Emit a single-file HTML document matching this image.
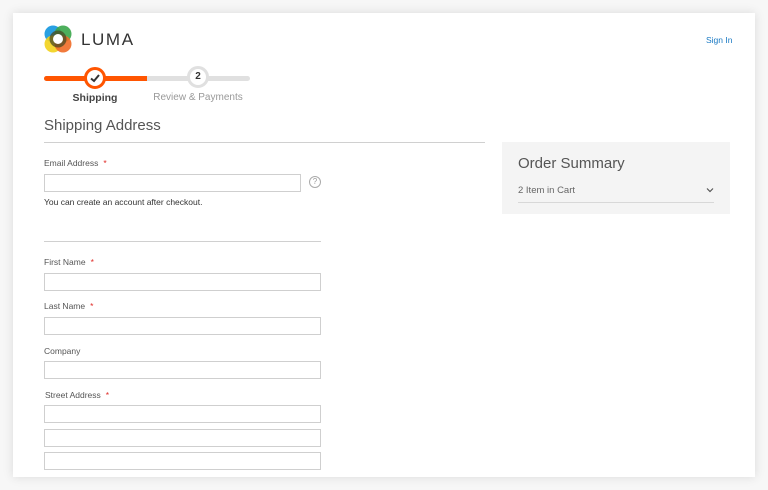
<!DOCTYPE html>
<html><head><meta charset="utf-8"><style>
*{margin:0;padding:0;box-sizing:border-box}
body{width:768px;height:490px;background:#f7f7f7;font-family:"Liberation Sans",sans-serif;position:relative;overflow:hidden}
.card{position:absolute;left:13px;top:13px;width:742px;height:464px;background:#fff;box-shadow:0 0 10px rgba(0,0,0,.12)}
.a{position:absolute}
.lbl{position:absolute;font-size:8.5px;color:#555}
.lbl b{color:#e02b27;font-weight:normal;margin-left:5px}
.inp{position:absolute;border:1px solid #cfcfcf;background:#fff;height:18px}
</style></head><body>
<div class="card"></div>
<svg class="a" style="left:43px;top:24px" width="30" height="30" viewBox="0 0 30 30">
<circle cx="10" cy="10" r="8.5" fill="#1e9be0" opacity=".95"/>
<circle cx="20" cy="10" r="8.5" fill="#3aa64a" opacity=".9"/>
<circle cx="10" cy="20" r="8.5" fill="#f2d21b" opacity=".9"/>
<circle cx="20" cy="20" r="8.5" fill="#ef6c27" opacity=".9"/>
<circle cx="15" cy="15" r="8.5" fill="#4a4a24" opacity=".75"/>
<circle cx="15" cy="15" r="5" fill="#fff"/>
</svg>
<div class="a" style="left:81px;top:30px;font-size:17px;letter-spacing:1.6px;color:#333">LUMA</div>
<div class="a" style="left:706px;top:35px;font-size:8.5px;color:#1979c3">Sign In</div>
<div class="a" style="left:44px;top:76px;width:206px;height:5px;background:#e0e0e0;border-radius:3px"></div>
<div class="a" style="left:44px;top:76px;width:103px;height:5px;background:#ff5501;border-radius:3px 0 0 3px"></div>
<div class="a" style="left:84px;top:67px;width:22px;height:22px;border-radius:50%;background:#fff;border:3px solid #ff5501"></div>
<svg class="a" style="left:89px;top:72px" width="12" height="12" viewBox="0 0 12 12"><path d="M2 6.5 L5 9 L10 3" stroke="#333" stroke-width="2" fill="none"/></svg>
<div class="a" style="left:187px;top:66px;width:22px;height:22px;border-radius:50%;background:#fff;border:3px solid #e0e0e0;font-size:10px;font-weight:bold;color:#333;text-align:center;line-height:16px">2</div>
<div class="a" style="left:60px;top:92px;width:70px;text-align:center;font-size:10.5px;font-weight:bold;color:#444">Shipping</div>
<div class="a" style="left:148px;top:92px;width:100px;text-align:center;font-size:10px;color:#999">Review &amp; Payments</div>
<div class="a" style="left:44px;top:117px;font-size:15px;color:#555">Shipping Address</div>
<div class="a" style="left:44px;top:142px;width:441px;height:1px;background:#d0d0d0"></div>
<div class="lbl" style="left:44px;top:158px">Email Address<b>*</b></div>
<div class="inp" style="left:44px;top:174px;width:257px"></div>
<div class="a" style="left:309px;top:176px;width:12px;height:12px;border:1px solid #aaa;border-radius:50%;font-size:8px;color:#999;text-align:center;line-height:10px">?</div>
<div class="lbl" style="left:44px;top:197px;color:#333">You can create an account after checkout.</div>
<div class="a" style="left:44px;top:241px;width:277px;height:1px;background:#d0d0d0"></div>
<div class="lbl" style="left:44px;top:257px">First Name<b>*</b></div>
<div class="inp" style="left:44px;top:273px;width:277px"></div>
<div class="lbl" style="left:44px;top:301px">Last Name<b>*</b></div>
<div class="inp" style="left:44px;top:317px;width:277px"></div>
<div class="lbl" style="left:44px;top:346px">Company</div>
<div class="inp" style="left:44px;top:361px;width:277px"></div>
<div class="lbl" style="left:45px;top:390px">Street Address<b>*</b></div>
<div class="inp" style="left:44px;top:405px;width:277px"></div>
<div class="inp" style="left:44px;top:429px;width:277px"></div>
<div class="inp" style="left:44px;top:452px;width:277px"></div>
<div class="a" style="left:502px;top:142px;width:228px;height:72px;background:#f4f4f4"></div>
<div class="a" style="left:518px;top:155px;font-size:15px;color:#555">Order Summary</div>
<div class="a" style="left:518px;top:185px;font-size:9.5px;color:#666">2 Item in Cart</div>
<svg class="a" style="left:706px;top:187px" width="8" height="6" viewBox="0 0 8 6"><path d="M1 1.5 L4 4.5 L7 1.5" stroke="#555" stroke-width="1.2" fill="none"/></svg>
<div class="a" style="left:518px;top:202px;width:196px;height:1px;background:#d8d8d8"></div>
</body></html>
